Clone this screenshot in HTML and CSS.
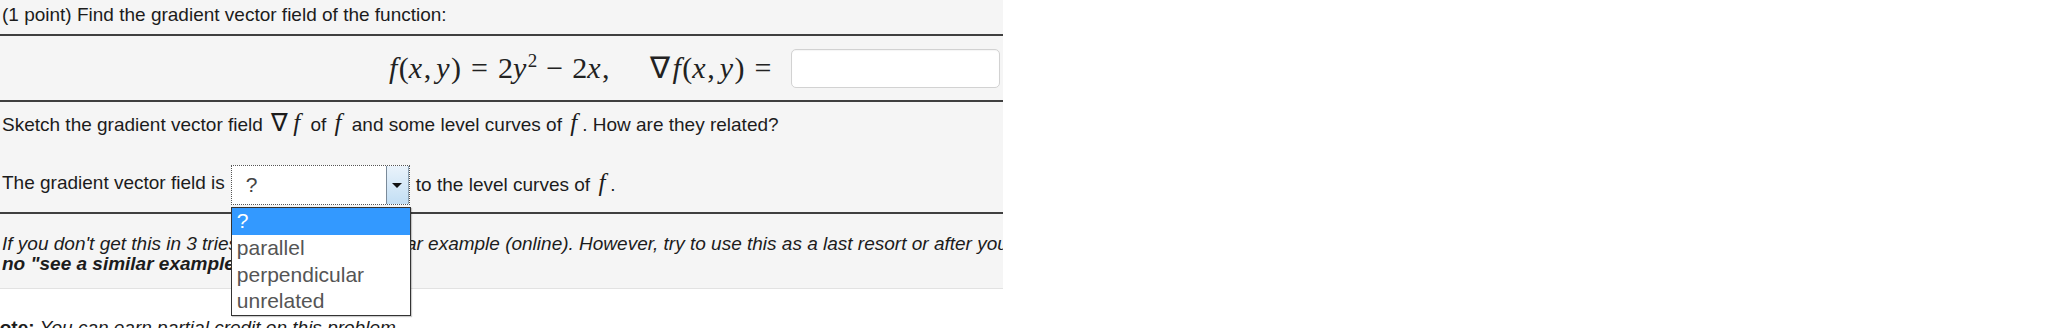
FILE: index.html
```html
<!DOCTYPE html>
<html>
<head>
<meta charset="utf-8">
<link rel="stylesheet" href="styles.css">
</head>
<body>
<div class="problem">
  <div class="head">(1 point) Find the gradient vector field of the function:</div>
  <div class="rule"></div>
  <div class="mathrow">
    <span class="math"><i>f</i>(<i>x</i>,<span class="thin"></span><i>y</i>)<span class="rel">=</span>2<i>y</i><sup>2</sup><span class="bin">−</span>2<i>x</i>,</span>
    <span class="math grad"><span class="nabla">∇</span><i>f</i>(<i>x</i>,<span class="thin"></span><i>y</i>)<span class="rel last">=</span></span>
    <span class="answer-box"></span>
  </div>
  <div class="rule"></div>
  <div class="sketch">Sketch the gradient vector field <span class="m"><span class="nab">∇</span><i>f</i></span> of <span class="m"><i>f</i></span> and some level curves of <span class="m"><i>f</i></span>. How are they related?</div>
  <div class="answer-row">
    <span class="lbl">The gradient vector field is</span>
    <div class="select">
      <span class="select-value">?</span>
      <span class="select-button"><span class="tri"></span></span>
      <ul class="dropdown">
        <li class="sel">?</li>
        <li>parallel</li>
        <li>perpendicular</li>
        <li>unrelated</li>
      </ul>
    </div>
    <span class="lbl">to the level curves of <span class="m"><i>f</i></span>.</span>
  </div>
  <div class="rule"></div>
  <div class="hint">
    <div class="hint-line">If you don't get this in 3 tries, you can get a similar example (online). However, try to use this as a last resort or after you have tried it several times.</div>
    <div class="hint-line"><b>no "see a similar example" on the exam.</b></div>
  </div>
</div>
<div class="note"><b>Note:</b> <i>You can earn partial credit on this problem.</i></div>
</body>
</html>
```
FILE: styles.css
```css
html, body {
  margin: 0;
  padding: 0;
  background: #ffffff;
}
body {
  font-family: "Liberation Sans", Arial, sans-serif;
  font-size: 19px;
  color: #1c1c1c;
  overflow: hidden;
  width: 2046px;
  height: 328px;
}
.problem {
  width: 1003px;
  background: #f5f5f5;
  border-bottom: 1px solid #e2e2e2;
  white-space: nowrap;
}
.head {
  height: 34px;
  line-height: 30px;
  padding-left: 2px;
}
.rule {
  height: 2px;
  background: #404040;
}
.mathrow {
  height: 64px;
  display: flex;
  align-items: center;
  padding-left: 389px;
}
.math {
  font-family: "Liberation Serif", "Times New Roman", serif;
  font-size: 30px;
  color: #222;
  line-height: 40px;
}
.math i {
  font-style: italic;
  padding-right: 1.5px;
}
.math sup {
  font-size: 19px;
  vertical-align: 11px;
  line-height: 0;
}
.thin {
  display: inline-block;
  width: 5px;
}
.rel {
  padding: 0 10px;
}
.rel.last {
  padding-right: 0;
}
.bin {
  padding: 0 9px;
}
.grad {
  margin-left: 40px;
}
.nabla {
  padding-right: 3px;
}
.answer-box {
  width: 207px;
  height: 37px;
  margin-left: 20px;
  background: #ffffff;
  border: 1px solid #d2d2d2;
  border-radius: 5px;
  box-shadow: inset 0 1px 1px rgba(0,0,0,0.04);
}
.sketch {
  height: 40px;
  line-height: 42px;
  padding-left: 2px;
}
.m {
  font-family: "Liberation Serif", "Times New Roman", serif;
  font-size: 25px;
  margin: 0 3px;
}
.m i {
  font-style: italic;
  padding-right: 2px;
}
.nab {
  padding-right: 5px;
}
.answer-row {
  height: 70px;
  display: flex;
  align-items: center;
  padding-left: 2px;
  padding-top: 16px;
  box-sizing: border-box;
  gap: 6px;
}
.lbl {
  padding-bottom: 5px;
}
.select {
  position: relative;
  width: 179px;
  height: 40px;
  box-sizing: border-box;
  border: 1px dotted #555;
  background: #ffffff;
  display: flex;
  align-items: stretch;
}
.select-value {
  flex: 1;
  padding-left: 14px;
  font-size: 21px;
  line-height: 38px;
  color: #444;
}
.select-button {
  width: 21px;
  border-left: 1px solid #7a8a99;
  border-right: 1px solid #8ea3b5;
  background: linear-gradient(#eaf3fb, #c2def4);
  display: flex;
  align-items: center;
  justify-content: center;
}
.tri {
  width: 0;
  height: 0;
  border-left: 5px solid transparent;
  border-right: 5px solid transparent;
  border-top: 5px solid #111;
}
.dropdown {
  position: absolute;
  top: 41px;
  left: -1px;
  width: 180px;
  margin: 0;
  padding: 0;
  list-style: none;
  background: #ffffff;
  border: 1px solid #333;
  box-sizing: border-box;
  z-index: 5;
  box-shadow: 1px 1px 1px rgba(0,0,0,0.2);
}
.dropdown li {
  height: 26.5px;
  line-height: 26px;
  font-size: 21px;
  color: #555;
  padding-left: 5px;
}
.dropdown li.sel {
  background: #3399ff;
  color: #ffffff;
  height: 27px;
}
.hint {
  height: 74px;
  padding-top: 20px;
  box-sizing: border-box;
  padding-left: 2px;
}
.hint-line {
  width: 1001px;
  overflow: hidden;
  line-height: 20px;
  font-style: italic;
  font-size: 19px;
}
.hint-line b {
  font-weight: bold;
}
.note {
  margin-top: 28px;
  margin-left: -14px;
  line-height: 22px;
  white-space: nowrap;
}
.note i {
  font-style: italic;
}
```
